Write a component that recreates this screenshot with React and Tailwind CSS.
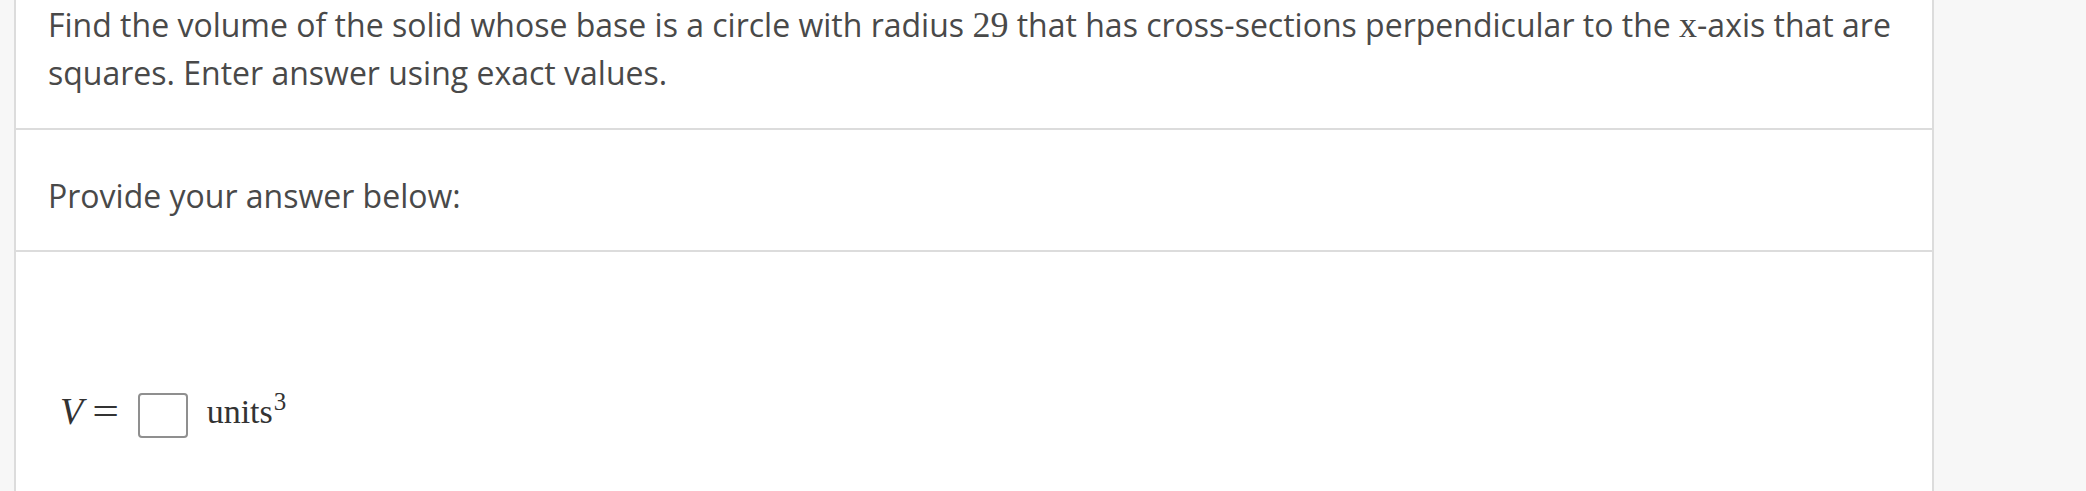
import React from "react";

const sans = { fontFamily: '"Open Sans", "Noto Sans", sans-serif' };

export default function App() {
  return (
    <div className="flex min-h-[491px] bg-[#f7f7f7]">
      <div className="ml-[14px] w-[1920px] border-x-2 border-[#dcdcdc] bg-white text-[#494949]">
        {/* question */}
        <div
          className="h-[130px] border-b-2 border-[#dcdcdc] pl-[32px] pr-[20px] pt-[1px] text-[32px] leading-[48px]"
          style={sans}
        >
          Find the volume of the solid whose base is a circle with radius{" "}
          <span className="font-['Liberation_Serif',serif] text-[36px] leading-none">29</span>{" "}
          that has cross-sections perpendicular to the{" "}
          <span className="font-['Liberation_Serif',serif] text-[36px] leading-none">x</span>-axis
          that are squares. Enter answer using exact values.
        </div>

        {/* prompt */}
        <div
          className="flex h-[122px] items-center border-b-2 border-[#dcdcdc] pl-[32px] pt-[12px] text-[32px]"
          style={sans}
        >
          Provide your answer below:
        </div>

        {/* answer row */}
        <div className="flex items-start pl-[44px] pt-[137px] font-['Liberation_Serif',serif] leading-[45px] text-[#333]">
          <span className="text-[38px] italic">V</span>
          <span className="ml-[12px] inline-block scale-x-[1.25] text-[38px]">=</span>
          <div className="ml-[21px] mt-[4px] h-[45px] w-[50px] rounded-[4px] border-2 border-[#8f8f8f] bg-white" />
          <span className="ml-[19px] text-[34px]">
            units
            <span className="relative top-[-13px] ml-[1px] text-[25px]">3</span>
          </span>
        </div>
      </div>
    </div>
  );
}
